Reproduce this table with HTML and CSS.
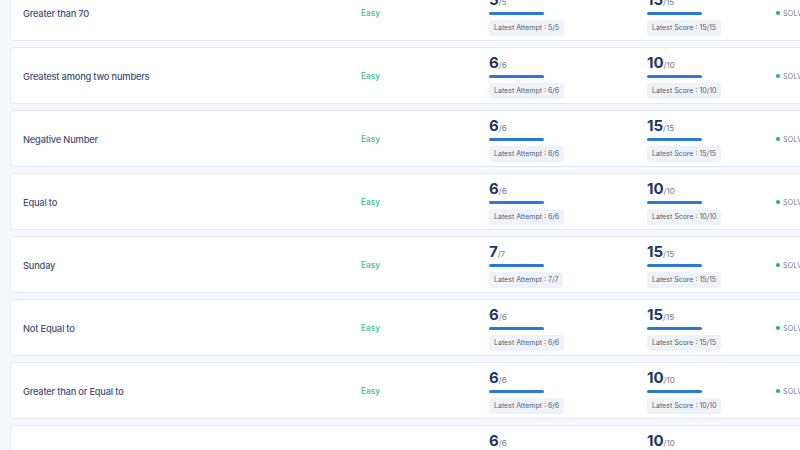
FILE: index.html
```html
<!DOCTYPE html>
<html lang="en">
<head>
<meta charset="utf-8">
<title>Problems</title>
<link rel="stylesheet" href="styles.css">
</head>
<body>
<div class="list">
  <div class="card">
    <div class="title">Greater than 70</div>
    <div class="diff">Easy</div>
    <div class="stat"><div class="num"><b>5</b><span>/5</span></div><div class="bar"></div><div class="badge">Latest Attempt : 5/5</div></div>
    <div class="stat"><div class="num"><b>15</b><span>/15</span></div><div class="bar"></div><div class="badge">Latest Score : 15/15</div></div>
    <div class="status"><i></i>SOLVED</div>
  </div>
  <div class="card">
    <div class="title">Greatest among two numbers</div>
    <div class="diff">Easy</div>
    <div class="stat"><div class="num"><b>6</b><span>/6</span></div><div class="bar"></div><div class="badge">Latest Attempt : 6/6</div></div>
    <div class="stat"><div class="num"><b>10</b><span>/10</span></div><div class="bar"></div><div class="badge">Latest Score : 10/10</div></div>
    <div class="status"><i></i>SOLVED</div>
  </div>
  <div class="card">
    <div class="title">Negative Number</div>
    <div class="diff">Easy</div>
    <div class="stat"><div class="num"><b>6</b><span>/6</span></div><div class="bar"></div><div class="badge">Latest Attempt : 6/6</div></div>
    <div class="stat"><div class="num"><b>15</b><span>/15</span></div><div class="bar"></div><div class="badge">Latest Score : 15/15</div></div>
    <div class="status"><i></i>SOLVED</div>
  </div>
  <div class="card">
    <div class="title">Equal to</div>
    <div class="diff">Easy</div>
    <div class="stat"><div class="num"><b>6</b><span>/6</span></div><div class="bar"></div><div class="badge">Latest Attempt : 6/6</div></div>
    <div class="stat"><div class="num"><b>10</b><span>/10</span></div><div class="bar"></div><div class="badge">Latest Score : 10/10</div></div>
    <div class="status"><i></i>SOLVED</div>
  </div>
  <div class="card">
    <div class="title">Sunday</div>
    <div class="diff">Easy</div>
    <div class="stat"><div class="num"><b>7</b><span>/7</span></div><div class="bar"></div><div class="badge">Latest Attempt : 7/7</div></div>
    <div class="stat"><div class="num"><b>15</b><span>/15</span></div><div class="bar"></div><div class="badge">Latest Score : 15/15</div></div>
    <div class="status"><i></i>SOLVED</div>
  </div>
  <div class="card">
    <div class="title">Not Equal to</div>
    <div class="diff">Easy</div>
    <div class="stat"><div class="num"><b>6</b><span>/6</span></div><div class="bar"></div><div class="badge">Latest Attempt : 6/6</div></div>
    <div class="stat"><div class="num"><b>15</b><span>/15</span></div><div class="bar"></div><div class="badge">Latest Score : 15/15</div></div>
    <div class="status"><i></i>SOLVED</div>
  </div>
  <div class="card">
    <div class="title">Greater than or Equal to</div>
    <div class="diff">Easy</div>
    <div class="stat"><div class="num"><b>6</b><span>/6</span></div><div class="bar"></div><div class="badge">Latest Attempt : 6/6</div></div>
    <div class="stat"><div class="num"><b>10</b><span>/10</span></div><div class="bar"></div><div class="badge">Latest Score : 10/10</div></div>
    <div class="status"><i></i>SOLVED</div>
  </div>
  <div class="card">
    <div class="title">Less than</div>
    <div class="diff">Easy</div>
    <div class="stat"><div class="num"><b>6</b><span>/6</span></div><div class="bar"></div><div class="badge">Latest Attempt : 6/6</div></div>
    <div class="stat"><div class="num"><b>10</b><span>/10</span></div><div class="bar"></div><div class="badge">Latest Score : 10/10</div></div>
    <div class="status"><i></i>SOLVED</div>
  </div>
</div>
</body>
</html>
```
FILE: styles.css
```css
html, body {
  margin: 0;
  padding: 0;
  background: #f5f8fc;
  overflow: hidden;
  width: 800px;
  height: 450px;
}
body {
  font-family: Inter, "Noto Sans", sans-serif;
}
.list {
  display: flex;
  flex-direction: column;
  gap: 6px;
  margin-top: -16px;
  padding-left: 10px;
  width: 860px;
}
.card {
  box-sizing: border-box;
  height: 57px;
  background: #ffffff;
  border: 1px solid #e3eaf3;
  border-radius: 4px;
  display: grid;
  grid-template-columns: 338px 128px 158px 129px auto;
  align-items: center;
  padding-left: 12px;
}
.title {
  font-size: 9.3px;
  font-weight: 500;
  letter-spacing: -0.2px;
  color: #44527a;
  padding-top: 1px;
}
.diff {
  font-size: 8.3px;
  font-weight: 500;
  color: #44bf8a;
  padding-top: 1px;
}
.stat {
  display: flex;
  flex-direction: column;
  align-items: flex-start;
  padding-top: 2px;
}
.num {
  line-height: 15px;
  color: #1e3766;
}
.num b {
  font-size: 15px;
  font-weight: 700;
}
.num span {
  font-size: 8px;
  color: #6b7a93;
}
.bar {
  width: 55px;
  height: 3px;
  background: #2a7ad3;
  border-radius: 2px;
  margin-top: 2px;
}
.badge {
  margin-top: 5px;
  padding: 4px 5px;
  background: #eff3f9;
  border-radius: 3px;
  font-size: 7px;
  line-height: 8px;
  color: #545e72;
}
.status {
  display: flex;
  align-items: center;
  gap: 3px;
  font-size: 7px;
  letter-spacing: 0.3px;
  color: #6b7a93;
  padding-top: 1px;
}
.status i {
  width: 4px;
  height: 4px;
  border-radius: 50%;
  background: #1fb36b;
}
```
